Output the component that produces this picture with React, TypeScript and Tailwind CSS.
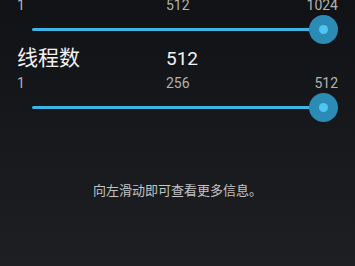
import React from 'react';

const FONT = { fontFamily: 'Roboto, "Noto Sans CJK SC", sans-serif' };

interface SliderProps {
  labels: [string, string, string];
}

// Labels row + track with the thumb parked at the max end
const Slider: React.FC<SliderProps> = ({ labels }) => {
  return (
    <div className="flex flex-col">
      <div className="flex pl-[17px] pr-[17px] h-4 text-[14px] leading-4 text-[#b2b2b2]">
        <span className="w-[149px]">{labels[0]}</span>
        <span>{labels[1]}</span>
        <span className="ml-auto">{labels[2]}</span>
      </div>
      <div className="mt-[2px] h-[29px] mx-[32px] flex items-center relative">
        <div className="h-[3px] w-full bg-[#3fb3e3] rounded-full" />
        <div className="absolute right-[-14.5px] top-0 w-[29px] h-[29px] rounded-full bg-[#2c8bb4] flex items-center justify-center">
          <div className="w-[9px] h-[9px] rounded-full bg-[#4fc5f3]" />
        </div>
      </div>
    </div>
  );
};

export default function App() {
  return (
    <div
      className="w-[355px] h-[266px] overflow-hidden bg-gradient-to-b from-[#111216] to-[#1d1f22]"
      style={FONT}
    >
      <div className="mt-[-3px]">
        <Slider labels={['1', '512', '1024']} />
      </div>

      {/* Thread count title */}
      <div className="mt-[4px] flex items-start h-[21px]">
        <div className="ml-[17px] w-[149px] text-[21px] leading-[21px] text-[#f2f2f2]">线程数</div>
        <div className="mt-[1px] text-[19px] leading-[19px] text-[#f2f2f2]">512</div>
      </div>

      <div className="mt-[6px]">
        <Slider labels={['1', '256', '512']} />
      </div>

      <div className="mt-[61px] text-center text-[13px] leading-4 text-[#c4c4c4]">
        向左滑动即可查看更多信息。
      </div>
    </div>
  );
}
